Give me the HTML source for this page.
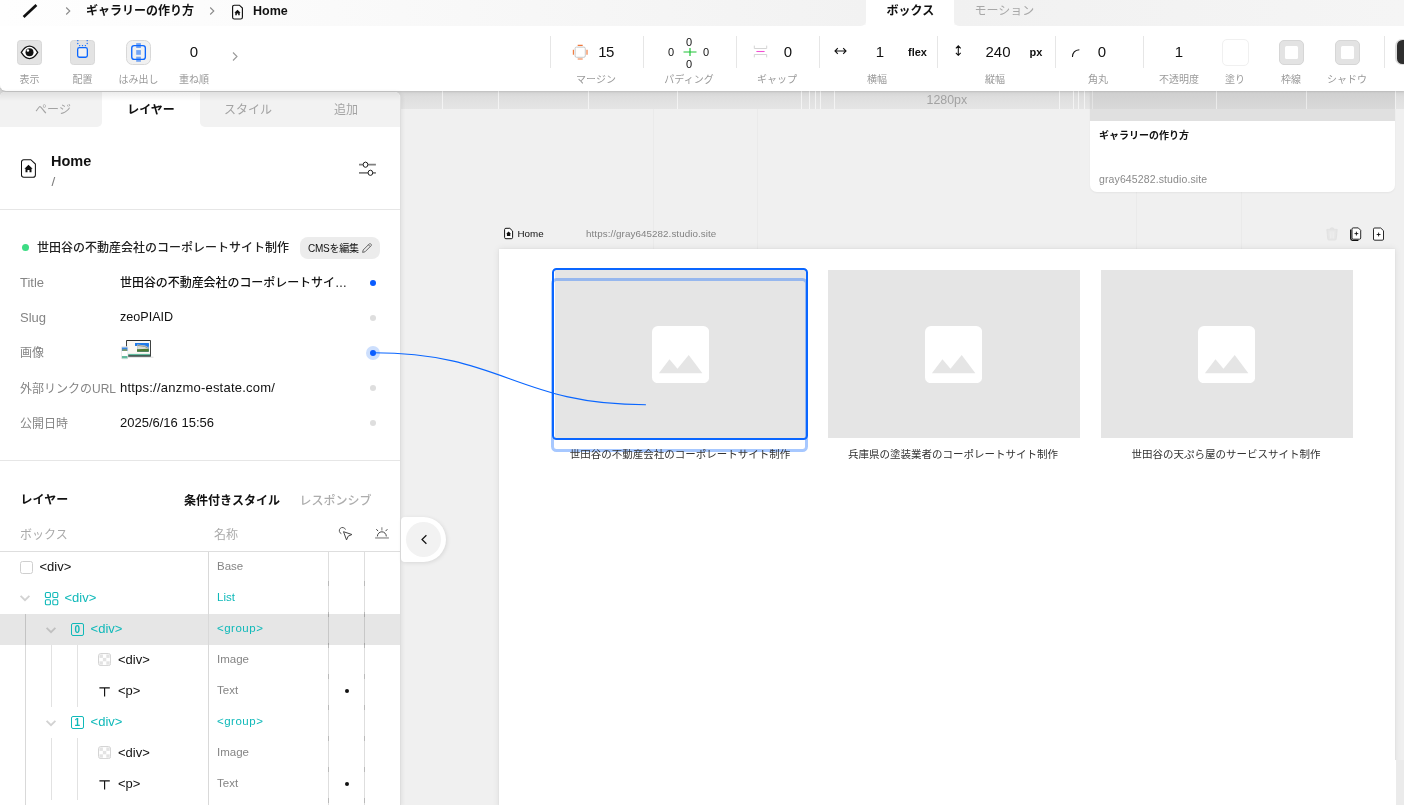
<!DOCTYPE html>
<html lang="ja">
<head>
<meta charset="utf-8">
<title>Home</title>
<style>
*{box-sizing:border-box;margin:0;padding:0}
html,body{width:1404px;height:805px;overflow:hidden;background:#f0f0f0}
body{font-family:"Liberation Sans","Noto Sans CJK JP",sans-serif;color:#111;position:relative;-webkit-font-smoothing:antialiased;will-change:transform}
.abs{position:absolute}
.t{position:absolute;white-space:nowrap;line-height:1}
/* ---------- canvas ---------- */
#canvas{position:absolute;left:0;top:0;width:1404px;height:805px;background:#f0f0f0}
/* ---------- top bar ---------- */
#topbar{position:absolute;left:0;top:0;width:1404px;height:25px;background:#fafafa}
#toolbar{position:absolute;left:0;top:22px;width:1404px;height:69px;background:#fff;border-radius:0 0 0 6px;box-shadow:0 .5px 2px rgba(0,0,0,.1)}
.lbl{position:absolute;font-size:10px;color:#9a9a9a;line-height:1;white-space:nowrap;transform:translateX(-50%)}
.val{position:absolute;font-size:15px;color:#111;line-height:1;white-space:nowrap;transform:translateX(-50%)}
.sep{position:absolute;top:36px;width:1px;height:32px;background:#e6e6e6}
.ib{position:absolute;width:25px;height:25px;border-radius:3.5px;background:#e3e3e3;border:1px solid #d8d8d8}
/* ---------- left panel ---------- */
#panel{position:absolute;left:0;top:92.2px;width:400.6px;height:714px;background:#fff;border-radius:5px 6px 0 0;overflow:hidden;box-shadow:1px 0 4px rgba(0,0,0,.07);border-right:.8px solid rgba(0,0,0,.13)}
#panel>.inner{position:absolute;left:0;top:-.2px;width:400px;height:713px}

/* panel coordinates are relative to panel (top:92) */
.tab{position:absolute;top:0;height:35.2px;background:#f2f2f2}
.tabt{position:absolute;top:11.9px;font-size:12px;color:#a3a3a3;line-height:1;white-space:nowrap;transform:translateX(-50%)}
.fl{position:absolute;left:20px;font-size:13px;color:#858585;line-height:1;white-space:nowrap}
.fv{position:absolute;left:120px;font-size:13px;color:#111;line-height:1;white-space:nowrap}
.dot{position:absolute;width:6px;height:6px;border-radius:50%;background:#dedede;left:370px;margin-top:-.5px}
.hl{position:absolute;left:0;width:400px;height:1px;background:#e6e6e6}
.vl{position:absolute;width:1px;background:#e2e2e2}
.rt{position:absolute;font-size:13px;line-height:1;white-space:nowrap;color:#111}
.rn{position:absolute;left:217px;font-size:11.5px;line-height:1;white-space:nowrap;color:#858585}
.teal{color:#0fb9b9}

.tick{position:absolute;top:91px;width:1px;height:18px;background:rgba(255,255,255,.6)}
.guide{position:absolute;top:109px;width:1px;height:140px;background:#eaeaea}
.ph{position:absolute;top:270px;width:252px;height:168.2px;background:#e5e5e5}
.cap{position:absolute;top:449.4px;font-size:10.5px;color:#333;line-height:1;white-space:nowrap;transform:translateX(-50%)}
</style>
</head>
<body>
<div id="canvas">

<div class="abs" style="left:0;top:88px;width:1404px;height:21px;background:linear-gradient(#cfcfcf 0,#d3d3d3 3px,#dedede 9px,#e5e5e5)"></div>
<div class="tick" style="left:442px"></div><div class="tick" style="left:498px"></div><div class="tick" style="left:588px"></div><div class="tick" style="left:677px"></div><div class="tick" style="left:801px"></div><div class="tick" style="left:809px"></div><div class="tick" style="left:815px"></div><div class="tick" style="left:820px"></div><div class="tick" style="left:834px"></div><div class="tick" style="left:1059px"></div><div class="tick" style="left:1072.7px"></div><div class="tick" style="left:1078.4px"></div><div class="tick" style="left:1084px"></div><div class="tick" style="left:1091.5px"></div><div class="tick" style="left:1216px"></div><div class="tick" style="left:1305.5px"></div><div class="tick" style="left:1394.5px"></div>
<div class="guide" style="left:653px"></div><div class="guide" style="left:757px"></div><div class="guide" style="left:1136px"></div><div class="guide" style="left:1241px"></div>
<div class="t" style="left:926.5px;top:94px;font-size:12.4px;color:#a2a2a2">1280px</div>
<div class="abs" style="left:1089.5px;top:80px;width:305px;height:112px;background:#fff;border-radius:0 0 7px 7px;box-shadow:0 1px 2px rgba(0,0,0,.05)"></div>
<div class="abs" style="left:1089.5px;top:91px;width:305px;height:18px;background:linear-gradient(#cfcfcf,#d9d9d9)"></div>
<div class="abs" style="left:1089.5px;top:109px;width:305px;height:11.5px;background:#e0e0e0"></div>
<div class="tick" style="left:1091.5px;background:rgba(255,255,255,.35)"></div><div class="tick" style="left:1216px;background:rgba(255,255,255,.5)"></div>
<div class="tick" style="left:1305.5px;background:rgba(255,255,255,.5)"></div>
<div class="t" style="left:1099px;top:131px;font-size:10px;font-weight:700;color:#111">ギャラリーの作り方</div>
<div class="t" style="left:1099px;top:173.5px;font-size:10.5px;letter-spacing:.12px;color:#8a8a8a">gray645282.studio.site</div>

<svg class="abs" style="left:503px;top:227px" width="11" height="13" viewBox="0 0 11 13"><path d="M1.6 2.6 Q1.6 1.3 2.9 1.3 L6.8 1.3 L9.6 4 L9.6 10.4 Q9.6 11.7 8.3 11.7 L2.9 11.7 Q1.6 11.7 1.6 10.4 Z" fill="#fff" stroke="#111" stroke-width="1"/><path d="M5.6 4.6 L8 6.8 L7.3 6.8 L7.3 9 L3.9 9 L3.9 6.8 L3.2 6.8 Z" fill="#111"/></svg>
<div class="t" style="left:517.5px;top:229.3px;font-size:9.8px;color:#111">Home</div>
<div class="t" style="left:586px;top:229px;font-size:9.8px;letter-spacing:.08px;color:#828282">https://gray645282.studio.site</div>

<svg class="abs" style="left:1326px;top:227px" width="12" height="14" viewBox="0 0 12 14"><path d="M0.8 2.4 H11.2 L10.2 12 Q10.1 13 9.1 13 H2.9 Q1.9 13 1.8 12 Z M4 2.2 Q4 0.8 6 0.8 Q8 0.8 8 2.2" fill="#e6e6e6" stroke="#e0e0e0" stroke-width=".8"/><path d="M4.1 4.4 L4.4 11.4 M6 4.4 V11.4 M7.9 4.4 L7.6 11.4" stroke="#efefef" stroke-width=".9" fill="none"/></svg>
<svg class="abs" style="left:1348.5px;top:226.5px" width="13" height="15" viewBox="0 0 13 15"><path d="M1.7 2.4 V11.6 Q1.7 13.4 3.5 13.4 H9.4" fill="none" stroke="#111" stroke-width="1.3"/><path d="M3 2.1 Q3 0.9 4.2 0.9 L9.3 0.9 L11.7 3.3 L11.7 11 Q11.7 12.2 10.5 12.2 L4.2 12.2 Q3 12.2 3 11 Z" fill="#fff" stroke="#111" stroke-width=".9"/><path d="M7.4 4.7 V8.5 M5.5 6.6 H9.3" stroke="#111" stroke-width=".9" fill="none"/></svg>
<svg class="abs" style="left:1371.5px;top:226.5px" width="13" height="15" viewBox="0 0 13 15"><path d="M1.5 2.2 Q1.5 1 2.7 1 L8.7 1 L11.5 3.7 L11.5 12 Q11.5 13.2 10.3 13.2 L2.7 13.2 Q1.5 13.2 1.5 12 Z" fill="#fff" stroke="#111" stroke-width=".9"/><path d="M6.6 5.6 V9.4 M4.7 7.5 H8.5" stroke="#111" stroke-width=".9" fill="none"/></svg>

<div class="abs" style="left:499px;top:249px;width:896px;height:560px;background:#fff;box-shadow:0 0 7px rgba(0,0,0,.085),0 0 1.5px rgba(0,0,0,.07)"></div><div class="abs" style="left:1390px;top:760px;width:6px;height:46px;background:#fff"></div><div class="abs" style="left:1396px;top:760px;width:8px;height:46px;background:#ebebeb"></div>
<div class="ph" style="left:554.5px"></div>
<div class="ph" style="left:827.5px"></div>
<div class="ph" style="left:1100.5px"></div>
<svg class="abs" style="left:652.2px;top:325.8px" width="57.2" height="57.2" viewBox="0 0 57 57"><rect x="0" y="0" width="57" height="57" rx="6" fill="#fff"/><path d="M6.9 47 L17.4 33.2 L25.4 42.7 L36.6 28.8 L50.2 47 Z" fill="#e5e5e5"/></svg><svg class="abs" style="left:925.2px;top:325.8px" width="57.2" height="57.2" viewBox="0 0 57 57"><rect x="0" y="0" width="57" height="57" rx="6" fill="#fff"/><path d="M6.9 47 L17.4 33.2 L25.4 42.7 L36.6 28.8 L50.2 47 Z" fill="#e5e5e5"/></svg><svg class="abs" style="left:1198.2px;top:325.8px" width="57.2" height="57.2" viewBox="0 0 57 57"><rect x="0" y="0" width="57" height="57" rx="6" fill="#fff"/><path d="M6.9 47 L17.4 33.2 L25.4 42.7 L36.6 28.8 L50.2 47 Z" fill="#e5e5e5"/></svg>
<div class="abs" style="left:551.2px;top:277.7px;width:257.2px;height:174px;border:3px solid rgba(10,102,255,.36);border-radius:5.5px"></div>
<div class="cap" style="left:680px">世田谷の不動産会社のコーポレートサイト制作</div>
<div class="cap" style="left:953px">兵庫県の塗装業者のコーポレートサイト制作</div>
<div class="cap" style="left:1226px">世田谷の天ぷら屋のサービスサイト制作</div>
<div class="abs" style="left:552px;top:268px;width:256px;height:172px;border:2.2px solid #0a66ff;border-radius:4.5px"></div>

</div>

<div id="toolbar"></div>
<div id="topbar">

<div class="abs" style="left:0;top:0;width:866px;height:25.5px;background:linear-gradient(to right,#fefefe 0,#fcfcfc 200px,#f2f2f2 866px);border-radius:0 0 5px 0"></div>
<div class="abs" style="left:866px;top:0;width:88px;height:26px;background:#fff"></div>
<div class="abs" style="left:954px;top:0;width:450px;height:25.5px;background:linear-gradient(to right,#f1f1f1,#f5f5f5);border-radius:0 0 0 5px"></div>
<svg class="abs" style="left:20px;top:2px" width="20" height="18" viewBox="0 0 20 18"><path d="M3.6 15 L16.4 3" stroke="#111" stroke-width="2.7" fill="none"/></svg>
<svg class="abs" style="left:64px;top:6px" width="8" height="10" viewBox="0 0 8 10"><path d="M2.2 1.5 L5.8 5 L2.2 8.5" stroke="#8a8a8a" stroke-width="1.1" fill="none"/></svg>
<div class="t" style="left:86px;top:5px;font-size:12px;font-weight:700;color:#111">ギャラリーの作り方</div>
<svg class="abs" style="left:208px;top:6px" width="8" height="10" viewBox="0 0 8 10"><path d="M2.2 1.5 L5.8 5 L2.2 8.5" stroke="#8a8a8a" stroke-width="1.1" fill="none"/></svg>
<svg class="abs" style="left:231px;top:3.5px" width="14" height="16" viewBox="0 0 14 16"><path d="M1.6 3 Q1.6 1.2 3.4 1.2 L8.4 1.2 L11.4 4.1 L11.4 13.2 Q11.4 15 9.6 15 L3.4 15 Q1.6 15 1.6 13.2 Z" fill="#fff" stroke="#111" stroke-width="1.15"/><path d="M6.5 5.8 L9.6 8.7 L8.7 8.7 L8.7 11.2 L7.2 11.2 L7.2 9.6 L5.8 9.6 L5.8 11.2 L4.3 11.2 L4.3 8.7 L3.4 8.7 Z" fill="#111"/></svg>
<div class="t" style="left:253px;top:4.5px;font-size:12.5px;font-weight:700;color:#111">Home</div>
<div class="t" style="left:886.5px;top:4.5px;font-size:12px;font-weight:700;color:#111">ボックス</div>
<div class="t" style="left:974.5px;top:4.5px;font-size:12px;color:#a8a8a8">モーション</div>

</div>
<div id="tools">

<div class="ib" style="left:17px;top:40px"></div>
<svg class="abs" style="left:20px;top:44px" width="19" height="17" viewBox="0 0 19 17"><path d="M1.3 8.4 C4.5 3.2 7.5 2.2 9.5 2.2 C11.5 2.2 14.5 3.2 17.7 8.4 C14.5 13.6 11.5 14.6 9.5 14.6 C7.5 14.6 4.5 13.6 1.3 8.4 Z" fill="#fff" stroke="#111" stroke-width="1.25"/><circle cx="9.5" cy="8.2" r="4" fill="#111"/><circle cx="7.9" cy="6.6" r="1.25" fill="#fff"/></svg>
<div class="lbl" style="left:29.5px;top:75px">表示</div>

<div class="ib" style="left:70px;top:40px"></div>
<svg class="abs" style="left:70px;top:40px" width="25" height="25" viewBox="0 0 25 25"><rect x="7.65" y="7.65" width="9.7" height="9.6" rx="1.8" fill="#f1f1f1" stroke="#0a66ff" stroke-width="1.3"/><path d="M7.8 0.6 V3.7 Q7.8 5.6 9.7 5.6 H15.3 Q17.2 5.6 17.2 3.7 V0.6" fill="none" stroke="#0a66ff" stroke-width="1.25" stroke-linecap="round" stroke-dasharray="0.1 2.75"/></svg>
<div class="lbl" style="left:82.5px;top:75px">配置</div>

<div class="ib" style="left:126px;top:40px;background:#f1f1f1;border-color:#d8d8d8;border-radius:6.5px"></div>
<svg class="abs" style="left:126px;top:40px" width="25" height="25" viewBox="0 0 25 25"><rect x="10.2" y="3.1" width="4.7" height="4.9" fill="#72a4f4"/><rect x="10.2" y="10.1" width="4.7" height="4.7" fill="#72a4f4"/><rect x="10.2" y="16.7" width="4.7" height="5.1" fill="#72a4f4"/><rect x="5.75" y="5.65" width="13.6" height="13.7" rx="2.4" fill="none" stroke="#0a66ff" stroke-width="1.35"/></svg>
<div class="lbl" style="left:138.5px;top:75px">はみ出し</div>

<div class="val" style="left:194px;top:44px">0</div>
<div class="lbl" style="left:194px;top:75px">重ね順</div>
<svg class="abs" style="left:231px;top:51px" width="8" height="11" viewBox="0 0 8 11"><path d="M2 1.5 L6 5.5 L2 9.5" stroke="#9a9a9a" stroke-width="1.1" fill="none"/></svg>

<div class="sep" style="left:550px"></div>
<div class="sep" style="left:643px"></div>
<div class="sep" style="left:736px"></div>
<div class="sep" style="left:819px"></div>
<div class="sep" style="left:937px"></div>
<div class="sep" style="left:1055px"></div>
<div class="sep" style="left:1143px"></div>
<div class="sep" style="left:1384px"></div>

<svg class="abs" style="left:572.3px;top:44.3px" width="16.4" height="16.4" viewBox="0 0 19 19"><rect x="3.6" y="3.6" width="11.8" height="11.8" rx="1.6" fill="#fff" stroke="#c4c4c4" stroke-width="1.1"/><path d="M6.6 1.6 H12.4 M6.6 17.4 H12.4 M1.6 6.6 V12.4 M17.4 6.6 V12.4" stroke="#f0773a" stroke-width="1.3" fill="none"/></svg>
<div class="val" style="left:606px;top:44px;font-size:15px;letter-spacing:-.6px">15</div>
<div class="lbl" style="left:596px;top:75px">マージン</div>

<div class="val" style="left:689px;top:37px;font-size:11px">0</div>
<div class="val" style="left:671px;top:47px;font-size:11px">0</div>
<div class="val" style="left:706px;top:47px;font-size:11px">0</div>
<div class="val" style="left:689px;top:58.5px;font-size:11px">0</div>
<svg class="abs" style="left:682.7px;top:45.4px" width="14" height="14" viewBox="0 0 14 14"><path d="M0.5 7 H13.5 M7 3 V11" stroke="#1ec337" stroke-width="1.2"/></svg>
<div class="lbl" style="left:689px;top:75px">パディング</div>

<svg class="abs" style="left:753px;top:45px" width="15" height="14" viewBox="0 0 15 14"><path d="M1.3 0.6 V3.5 H13.7 V0.6 M1.3 12.4 V9.5 H13.7 V12.4" fill="none" stroke="#d4d4d4" stroke-width="1"/><path d="M3.4 6.5 H11.6" stroke="#f24fd4" stroke-width="1.1"/></svg>
<div class="val" style="left:788px;top:44px">0</div>
<div class="lbl" style="left:777px;top:75px">ギャップ</div>

<svg class="abs" style="left:834px;top:45.6px" width="13" height="10" viewBox="0 0 13 10"><path d="M1.2 5 H11.8 M3.8 2.2 L1 5 L3.8 7.8 M9.2 2.2 L12 5 L9.2 7.8" fill="none" stroke="#111" stroke-width="1.1"/></svg>
<div class="val" style="left:880px;top:44px">1</div>
<div class="t" style="left:908px;top:47px;font-size:11px;font-weight:700;color:#111">flex</div>
<div class="lbl" style="left:877px;top:75px">横幅</div>

<svg class="abs" style="left:954.2px;top:44.8px" width="8.6" height="11.2" viewBox="0 0 10 13"><path d="M5 1.2 V11.8 M2.2 3.8 L5 1 L7.8 3.8 M2.2 9.2 L5 12 L7.8 9.2" fill="none" stroke="#111" stroke-width="1.25"/></svg>
<div class="val" style="left:998px;top:44px">240</div>
<div class="t" style="left:1029.5px;top:47px;font-size:11px;font-weight:700;color:#111">px</div>
<div class="lbl" style="left:995px;top:75px">縦幅</div>

<svg class="abs" style="left:1071px;top:48.4px" width="10" height="10" viewBox="0 0 11 11"><path d="M1.6 9.8 Q1.8 2.6 9.2 2" fill="none" stroke="#111" stroke-width="1.2"/></svg>
<div class="val" style="left:1102px;top:44px">0</div>
<div class="lbl" style="left:1098px;top:75px">角丸</div>

<div class="val" style="left:1179px;top:44px">1</div>
<div class="lbl" style="left:1179px;top:75px">不透明度</div>

<div class="abs" style="left:1222.3px;top:39.2px;width:26.6px;height:26.6px;border-radius:5px;background:#fff;border:1px solid #f0f0f0"></div>
<div class="lbl" style="left:1235px;top:75px">塗り</div>

<div class="abs" style="left:1279px;top:40px;width:25px;height:25px;border-radius:5px;background:#e3e3e3;border:1px solid #d6d6d6"></div>
<div class="abs" style="left:1284.8px;top:45.8px;width:13.4px;height:13.4px;border-radius:1.5px;background:#fff"></div>
<div class="lbl" style="left:1291px;top:75px">枠線</div>

<div class="abs" style="left:1335px;top:40px;width:25px;height:25px;border-radius:5px;background:#e3e3e3;border:1px solid #d6d6d6"></div>
<div class="abs" style="left:1340.8px;top:45.8px;width:13.4px;height:13.4px;border-radius:1.5px;background:#fff"></div>
<div class="lbl" style="left:1347px;top:75px">シャドウ</div>

<div class="abs" style="left:1395.4px;top:38.7px;width:14px;height:26.6px;border-radius:7px 0 0 7px;background:#dcdcdc"></div><div class="abs" style="left:1396.9px;top:40.1px;width:14px;height:23.6px;border-radius:5.5px 0 0 5.5px;background:#2e2e2e"></div>

</div>

<div id="panel"><div class="inner">

<div class="tab" style="left:0;width:102px;border-radius:0 0 5px 0"></div>
<div class="tab" style="left:200px;width:201px;border-radius:0 0 0 5px"></div>
<div class="tabt" style="left:53px">ページ</div>
<div class="tabt" style="left:151px;color:#111;font-weight:700">レイヤー</div>
<div class="tabt" style="left:248px">スタイル</div>
<div class="tabt" style="left:346px">追加</div>

<svg class="abs" style="left:20px;top:66px" width="17" height="21" viewBox="0 0 17 21"><path d="M1.5 4 Q1.5 1.7 3.8 1.7 L10.8 1.7 L15.4 6 L15.4 17 Q15.4 19.3 13.1 19.3 L3.8 19.3 Q1.5 19.3 1.5 17 Z" fill="#fff" stroke="#111" stroke-width="1.05"/><path d="M8.5 6.8 L12.6 10.7 L11.5 10.7 L11.5 14.2 L9.5 14.2 L9.5 12 L7.5 12 L7.5 14.2 L5.5 14.2 L5.5 10.7 L4.4 10.7 Z" fill="#111"/></svg>
<div class="t" style="left:51px;top:62px;font-size:14.5px;font-weight:700;color:#111">Home</div>
<div class="t" style="left:51.5px;top:82.5px;font-size:13.5px;color:#7a7a7a">/</div>
<svg class="abs" style="left:358px;top:67.3px" width="20" height="20" viewBox="0 0 20 20"><path d="M1 5.7 H5 M10 5.7 H17.9 M1 13.8 H10 M15 13.8 H17.9" stroke="#808080" stroke-width="1.8" fill="none"/><ellipse cx="7.5" cy="5.7" rx="2.3" ry="2.6" fill="#fff" stroke="#111" stroke-width=".95"/><ellipse cx="12.4" cy="13.8" rx="2.3" ry="2.6" fill="#fff" stroke="#111" stroke-width=".95"/></svg>
<div class="hl" style="top:117px"></div>

<div class="abs" style="left:22px;top:152px;width:7px;height:7px;border-radius:50%;background:#3ddc84"></div>
<div class="t" style="left:37px;top:150.4px;font-size:12px;font-weight:500;color:#222">世田谷の不動産会社のコーポレートサイト制作</div>
<div class="abs" style="left:300px;top:145px;width:80px;height:22px;border-radius:8px;background:#ececec"></div>
<div class="t" style="left:308px;top:151.5px;font-size:10px;letter-spacing:-.25px;color:#111">CMSを編集</div>
<svg class="abs" style="left:361px;top:150px" width="12" height="12" viewBox="0 0 12 12"><path d="M1.6 10.4 L2.2 8 L8.4 1.8 Q9 1.2 9.6 1.8 L10.2 2.4 Q10.8 3 10.2 3.6 L4 9.8 Z M7.4 2.8 L9.2 4.6" fill="none" stroke="#666" stroke-width="1"/></svg>

<div class="fl" style="top:184px">Title</div>
<div class="fv" style="top:184.5px;font-weight:500;font-size:12px;letter-spacing:-.06px">世田谷の不動産会社のコーポレートサイ…</div>
<div class="dot" style="top:188.5px;background:#0a5cff"></div>
<div class="fl" style="top:219px">Slug</div>
<div class="fv" style="top:219px;font-size:12.6px">zeoPIAID</div>
<div class="dot" style="top:223.5px"></div>
<div class="fl" style="top:255px;font-size:12px">画像</div>
<svg class="abs" style="left:120px;top:246px" width="36" height="24" viewBox="0 0 36 24">
<rect x="6.1" y="2" width="24.8" height="16.8" rx="0.8" fill="#2a2d2c"/>
<rect x="7" y="3" width="23" height="13.6" fill="#faf8f3"/>
<path d="M15 5.5 Q15 5 15.5 5 H28.3 Q28.8 5 28.8 5.5 V13.3 Q28.8 13.8 28.3 13.8 H17.2 V8 H15 Z" fill="#2f7fe0"/>
<path d="M15 5.4 Q15 5 15.6 5 H28.2 Q28.8 5 28.8 5.6 V8.2 L25 7.2 L17.4 6.4 L15 8 Z" fill="#1f7bea"/>
<path d="M17.2 6.6 L25 7.4 L28.4 9.4 L28.4 12 L17.2 12.4 Z" fill="#d9ddd6"/>
<path d="M17 11.2 L28.8 10.8 V13.2 Q28.8 13.8 28.2 13.8 H17.6 Q17 13.8 17 13.2 Z" fill="#4c7a32"/>
<path d="M17.4 7.4 L24.6 8.4 L27.8 10 " stroke="#6b6f68" stroke-width=".7" fill="none"/>
<rect x="7" y="15.9" width="23" height="1.6" fill="#63bb9f"/>
<rect x="6.1" y="17.5" width="24.8" height="1.3" fill="#3d4d49"/>
<path d="M8 19.2 H33.5" stroke="#d2d2d2" stroke-width=".8"/>
<rect x="1.2" y="8.2" width="7" height="13" rx="1.2" fill="#e4e4e4"/>
<rect x="1.9" y="9" width="5.6" height="11.4" rx=".6" fill="#fff"/>
<rect x="1.9" y="9.4" width="5.6" height="3.6" fill="#3d86dd"/>
<rect x="2.4" y="11.2" width="4.6" height="1.8" fill="#7a9a6a"/>
<rect x="1.9" y="18" width="5.6" height="2.4" fill="#63bb9f"/>
</svg>
<div class="abs" style="left:366px;top:254px;width:14px;height:14px;border-radius:50%;background:#cddffd"></div>
<div class="dot" style="top:258.5px;background:#0a5cff"></div>
<div class="fl" style="top:290.5px;font-size:12px">外部リンクのURL</div>
<div class="fv" style="top:289px;letter-spacing:.22px">https://anzmo-estate.com/</div>
<div class="dot" style="top:293.5px"></div>
<div class="fl" style="top:325.5px;font-size:12px">公開日時</div>
<div class="fv" style="top:324px">2025/6/16 15:56</div>
<div class="dot" style="top:328.5px"></div>

<div class="hl" style="top:368px"></div>
<div class="t" style="left:20.5px;top:401.5px;font-size:12px;font-weight:700;color:#111">レイヤー</div>
<div class="t" style="left:184px;top:402.5px;font-size:12px;font-weight:700;color:#111">条件付きスタイル</div>
<div class="t" style="left:299.4px;top:402.5px;font-size:12px;font-weight:500;color:#adadad">レスポンシブ</div>
<div class="t" style="left:20px;top:437px;font-size:12px;color:#aaa">ボックス</div>
<div class="t" style="left:214px;top:437px;font-size:12px;color:#aaa">名称</div>
<svg class="abs" style="left:338px;top:434px" width="16" height="16" viewBox="0 0 16 16"><path d="M3.4 7.7 A3.2 3.2 0 1 1 7.5 3.6" fill="none" stroke="#555" stroke-width="1"/><path d="M5.5 5.7 L13.9 8.5 L10.2 10.2 L8.5 13.9 Z" fill="#fff" stroke="#444" stroke-width="1" stroke-linejoin="round"/></svg>
<svg class="abs" style="left:374px;top:434px" width="16" height="16" viewBox="0 0 16 16"><path d="M1.1 11.9 H14.9" stroke="#b2b2b2" stroke-width="1.9" fill="none"/><path d="M3.4 10.4 A4.45 4.6 0 0 1 12.3 10.4" fill="none" stroke="#444" stroke-width="1"/><path d="M2.3 3.2 L4.1 5.1 M13.4 3.2 L11.6 5.1" stroke="#444" stroke-width="1" fill="none"/><path d="M7.85 1.3 V4.6" stroke="#9a9a9a" stroke-width="1.3" fill="none"/></svg>
<div class="hl" style="top:458.7px;background:#dedede"></div>

<!-- rows -->
<div class="abs" style="left:0;top:522px;width:400px;height:30.5px;background:#e6e6e6"></div>
<div class="vl" style="left:208px;top:460px;height:260px;background:#d9d9d9"></div>
<div class="vl" style="left:328px;top:460px;height:260px;background:repeating-linear-gradient(rgba(0,0,0,.13) 0 28.5px,rgba(0,0,0,.3) 28.5px 33.5px,rgba(0,0,0,.13) 33.5px 62px);background-size:1px 31px;background:linear-gradient(rgba(0,0,0,.13),rgba(0,0,0,.13))"></div><div class="vl" style="left:328px;top:488.5px;height:5px;background:rgba(0,0,0,.16)"></div><div class="vl" style="left:328px;top:519.5px;height:5px;background:rgba(0,0,0,.16)"></div><div class="vl" style="left:328px;top:550.5px;height:5px;background:rgba(0,0,0,.16)"></div><div class="vl" style="left:328px;top:581.5px;height:5px;background:rgba(0,0,0,.16)"></div><div class="vl" style="left:328px;top:612.5px;height:5px;background:rgba(0,0,0,.16)"></div><div class="vl" style="left:328px;top:643.5px;height:5px;background:rgba(0,0,0,.16)"></div><div class="vl" style="left:328px;top:674.5px;height:5px;background:rgba(0,0,0,.16)"></div><div class="vl" style="left:328px;top:705.5px;height:5px;background:rgba(0,0,0,.16)"></div>
<div class="vl" style="left:364px;top:460px;height:260px;background:repeating-linear-gradient(rgba(0,0,0,.13) 0 28.5px,rgba(0,0,0,.3) 28.5px 33.5px,rgba(0,0,0,.13) 33.5px 62px);background-size:1px 31px;background:linear-gradient(rgba(0,0,0,.13),rgba(0,0,0,.13))"></div><div class="vl" style="left:364px;top:488.5px;height:5px;background:rgba(0,0,0,.16)"></div><div class="vl" style="left:364px;top:519.5px;height:5px;background:rgba(0,0,0,.16)"></div><div class="vl" style="left:364px;top:550.5px;height:5px;background:rgba(0,0,0,.16)"></div><div class="vl" style="left:364px;top:581.5px;height:5px;background:rgba(0,0,0,.16)"></div><div class="vl" style="left:364px;top:612.5px;height:5px;background:rgba(0,0,0,.16)"></div><div class="vl" style="left:364px;top:643.5px;height:5px;background:rgba(0,0,0,.16)"></div><div class="vl" style="left:364px;top:674.5px;height:5px;background:rgba(0,0,0,.16)"></div><div class="vl" style="left:364px;top:705.5px;height:5px;background:rgba(0,0,0,.16)"></div>
<div class="vl" style="left:25px;top:522px;height:200px;background:rgba(0,0,0,.15)"></div>
<div class="vl" style="left:51px;top:552.5px;height:62px"></div>
<div class="vl" style="left:77px;top:552.5px;height:62px"></div>
<div class="vl" style="left:51px;top:645.5px;height:62px"></div>
<div class="vl" style="left:77px;top:645.5px;height:62px"></div>

<div class="abs" style="left:20px;top:468.5px;width:13px;height:13px;border-radius:2.5px;background:#fff;border:1px solid #cfcfcf"></div>
<div class="rt" style="left:39.5px;top:467.5px">&lt;div&gt;</div>
<div class="rn" style="top:468.5px">Base</div>

<svg class="abs" style="left:19px;top:501px" width="12" height="10" viewBox="0 0 12 10"><path d="M1.6 2.8 L6 7.2 L10.4 2.8" stroke="#d2d2d2" stroke-width="1.8" fill="none"/></svg>
<svg class="abs" style="left:43px;top:498px" width="16" height="16" viewBox="0 0 16 16"><g fill="none" stroke="#0fb9b9" stroke-width="1.1"><rect x="2.4" y="2.5" width="5" height="5" rx="1.3"/><rect x="9.8" y="2.5" width="5" height="5" rx="1.3"/><rect x="2.4" y="9.8" width="5" height="5" rx="1.3"/><rect x="9.8" y="9.8" width="5" height="5" rx="1.3"/></g></svg>
<div class="rt teal" style="left:64.5px;top:499px">&lt;div&gt;</div>
<div class="rn teal" style="top:499.5px">List</div>

<svg class="abs" style="left:45px;top:532.6px" width="12" height="10" viewBox="0 0 12 10"><path d="M1.6 2.8 L6 7.2 L10.4 2.8" stroke="#c0c0c0" stroke-width="1.8" fill="none"/></svg>
<div class="abs" style="left:71px;top:530.5px;width:13px;height:13px;border-radius:2px;border:1.2px solid #0fb9b9"></div>
<div class="t teal" style="left:74.5px;top:532.6px;font-size:10px;font-weight:700">0</div>
<div class="rt teal" style="left:90.6px;top:530px">&lt;div&gt;</div>
<div class="rn teal" style="top:530.5px;letter-spacing:.5px">&lt;group&gt;</div>

<svg class="abs" style="left:98px;top:560.5px" width="13.2" height="13.2" viewBox="0 0 14 14"><rect x="0.6" y="0.6" width="12.8" height="12.8" rx="2.4" fill="#fff" stroke="#cfcfcf" stroke-width="1"/><rect x="1.6" y="1.6" width="3.6" height="3.6" fill="#e3e3e3"/><rect x="8.8" y="1.6" width="3.6" height="3.6" fill="#e3e3e3"/><rect x="5.2" y="5.2" width="3.6" height="3.6" fill="#e3e3e3"/><rect x="1.6" y="8.8" width="3.6" height="3.6" fill="#e3e3e3"/><rect x="8.8" y="8.8" width="3.6" height="3.6" fill="#e3e3e3"/></svg>
<div class="rt" style="left:118px;top:561px">&lt;div&gt;</div>
<div class="rn" style="top:561.5px">Image</div>

<svg class="abs" style="left:98px;top:592px" width="13" height="14" viewBox="0 0 13 14"><path d="M1.4 3.8 H11.8 M6.6 3.8 V12.6" stroke="#111" stroke-width="1.15" fill="none"/></svg>
<div class="rt" style="left:118px;top:592px">&lt;p&gt;</div>
<div class="rn" style="top:592.5px">Text</div>
<div class="abs" style="left:345px;top:597px;width:4px;height:4px;border-radius:50%;background:#111"></div>

<svg class="abs" style="left:45px;top:625.6px" width="12" height="10" viewBox="0 0 12 10"><path d="M1.6 2.8 L6 7.2 L10.4 2.8" stroke="#d2d2d2" stroke-width="1.8" fill="none"/></svg>
<div class="abs" style="left:71px;top:623.5px;width:13px;height:13px;border-radius:2px;border:1.2px solid #0fb9b9"></div>
<div class="t teal" style="left:74.5px;top:625.6px;font-size:10px;font-weight:700">1</div>
<div class="rt teal" style="left:90.6px;top:623px">&lt;div&gt;</div>
<div class="rn teal" style="top:623.5px;letter-spacing:.5px">&lt;group&gt;</div>

<svg class="abs" style="left:98px;top:653.5px" width="13.2" height="13.2" viewBox="0 0 14 14"><rect x="0.6" y="0.6" width="12.8" height="12.8" rx="2.4" fill="#fff" stroke="#cfcfcf" stroke-width="1"/><rect x="1.6" y="1.6" width="3.6" height="3.6" fill="#e3e3e3"/><rect x="8.8" y="1.6" width="3.6" height="3.6" fill="#e3e3e3"/><rect x="5.2" y="5.2" width="3.6" height="3.6" fill="#e3e3e3"/><rect x="1.6" y="8.8" width="3.6" height="3.6" fill="#e3e3e3"/><rect x="8.8" y="8.8" width="3.6" height="3.6" fill="#e3e3e3"/></svg>
<div class="rt" style="left:118px;top:654px">&lt;div&gt;</div>
<div class="rn" style="top:654.5px">Image</div>

<svg class="abs" style="left:98px;top:685px" width="13" height="14" viewBox="0 0 13 14"><path d="M1.4 3.8 H11.8 M6.6 3.8 V12.6" stroke="#111" stroke-width="1.15" fill="none"/></svg>
<div class="rt" style="left:118px;top:685px">&lt;p&gt;</div>
<div class="rn" style="top:685.5px">Text</div>
<div class="abs" style="left:345px;top:690px;width:4px;height:4px;border-radius:50%;background:#111"></div>

<div class="abs" style="left:0;top:0;width:400px;height:9px;background:linear-gradient(rgba(0,0,0,.075),rgba(0,0,0,0))"></div>
</div></div>
<svg class="abs" style="left:0;top:0;pointer-events:none" width="1404" height="805" viewBox="0 0 1404 805"><path d="M373.2 352.8 C 503.2 352.8 515.9 404.7 645.9 404.7" fill="none" stroke="#0a66ff" stroke-width="1.1"/></svg>
<div class="abs" style="left:400.5px;top:516.7px;width:45.6px;height:45.5px;background:#fff;border-radius:4px 23px 23px 4px;box-shadow:1px 1px 4px rgba(0,0,0,.10)"></div>
<div class="abs" style="left:406px;top:522px;width:35px;height:35px;border-radius:50%;background:#f2f2f2"></div>
<svg class="abs" style="left:418.5px;top:533px" width="10" height="13" viewBox="0 0 10 13"><path d="M7.4 2.2 L3 6.5 L7.4 10.8" stroke="#111" stroke-width="1.2" fill="none"/></svg>

</body>
</html>
